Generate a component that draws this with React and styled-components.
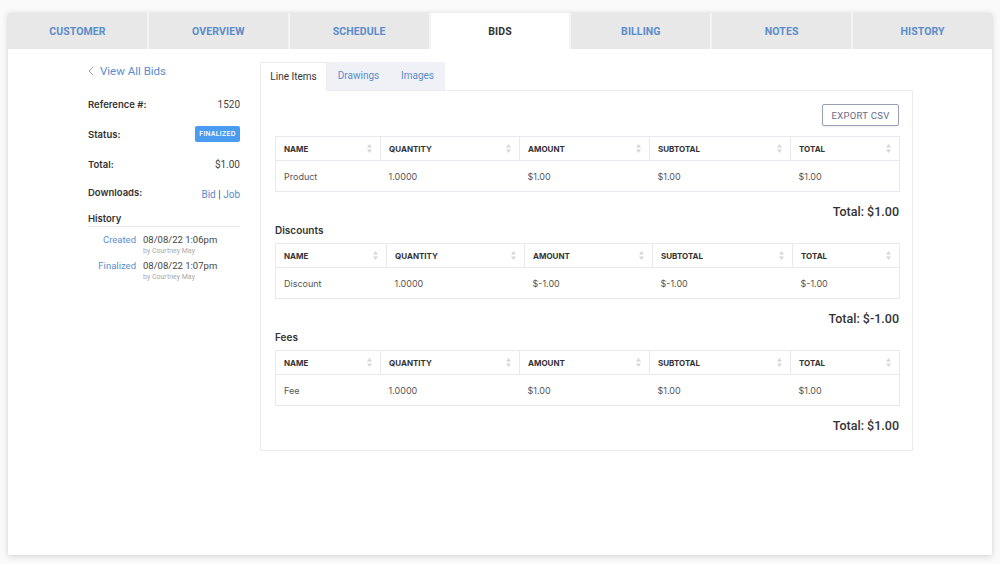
import React, {useState} from 'react';
import styled, {createGlobalStyle} from 'styled-components';

const GlobalStyle = createGlobalStyle`
  html, body {
    margin: 0;
    padding: 0;
    background: #fafafa;
    font-family: Roboto, "Liberation Sans", sans-serif;
  }
`;

const Page = styled.div`
  padding: 13px 8px 9px 8px;
`;

const Card = styled.div`
  height: 542px;
  background: #fff;
  box-shadow: 0 1px 6px rgba(0, 0, 0, 0.18);
  display: flex;
  flex-direction: column;
`;

const TabBar = styled.div`
  display: grid;
  grid-template-columns: repeat(7, 1fr);
  column-gap: 2px;
  background: #f4f4f4;
`;

const Tab = styled.div`
  height: 36px;
  display: flex;
  align-items: center;
  justify-content: center;
  font-size: 10.5px;
  font-weight: 700;
  letter-spacing: 0.1px;
  background: ${(p) => (p.active ? '#fff' : '#e8e8e8')};
  color: ${(p) => (p.active ? '#333' : '#5b8ccb')};
`;

const Body = styled.div`
  display: flex;
  padding-left: 80px;
  gap: 20px;
`;

const Side = styled.div`
  width: 152px;
  padding-top: 14px;
  font-family: Inter, Roboto, sans-serif;
`;

const BackLink = styled.div`
  display: flex;
  align-items: center;
  gap: 6px;
  height: 16px;
  font-size: 11.5px;
  color: #5b8ccb;
  font-family: Roboto, sans-serif;
  margin-bottom: 10px;
`;

const InfoRow = styled.div`
  display: flex;
  align-items: center;
  justify-content: space-between;
  height: ${(p) => p.h || 30}px;
`;

const Label = styled.span`
  font-size: 9.5px;
  font-weight: 600;
  color: #333;
`;

const Value = styled.span`
  font-size: 10px;
  color: #444;
  font-family: Roboto, sans-serif;
`;

const LinkText = styled.span`
  font-size: 10px;
  color: #5b8ccb;
  font-family: Roboto, sans-serif;
`;

const Badge = styled.span`
  background: #4a9cf0;
  color: #fff;
  font-size: 6.5px;
  font-weight: 600;
  letter-spacing: 0.3px;
  padding: 0 6px;
  height: 16px;
  width: 45px;
  box-sizing: border-box;
  display: flex;
  align-items: center;
  justify-content: center;
  border-radius: 2px;
`;

const HistoryHead = styled.div`
  margin-top: 7px;
  line-height: 14px;
  font-size: 9.5px;
  font-weight: 600;
  color: #333;
  border-bottom: 1px solid #e6e6e6;
  margin-bottom: 7px;
`;

const Entry = styled.div`
  display: flex;
  gap: 7px;
  margin-bottom: 4px;
  font-family: Roboto, sans-serif;
`;

const EntryLabel = styled.div`
  width: 48px;
  text-align: right;
  font-size: 9.5px;
  line-height: 12px;
  color: #5b8ccb;
`;

const EntryDate = styled.div`
  font-size: 9.5px;
  line-height: 12px;
  color: #444;
`;

const EntryBy = styled.div`
  font-size: 7px;
  line-height: 10px;
  color: #aaa;
`;

const Main = styled.div`
  width: 653px;
  padding-top: 13px;
`;

const SubTabs = styled.div`
  display: flex;
  height: 28px;
`;

const SubTab = styled.div`
  width: ${(p) => p.w}px;
  display: flex;
  align-items: center;
  justify-content: center;
  font-size: 10px;
  box-sizing: border-box;
  padding-bottom: 2px;
  color: ${(p) => (p.active ? '#333' : '#5b8ccb')};
  background: ${(p) => (p.active ? '#fff' : '#f0f1f6')};
  border: 1px solid ${(p) => (p.active ? '#ececec' : '#f0f1f6')};
  border-bottom: none;
  margin-bottom: ${(p) => (p.active ? '-1px' : '0')};
  position: relative;
  z-index: ${(p) => (p.active ? 1 : 0)};
`;

const Panel = styled.div`
  border: 1px solid #ececec;
  padding: 13px 13px 16px 14px;
  display: flex;
  flex-direction: column;
`;

const Toolbar = styled.div`
  display: flex;
  justify-content: flex-end;
  margin-bottom: 10px;
`;

const ExportButton = styled.button`
  width: 77px;
  height: 22px;
  border: 1px solid #9a9db4;
  background: #fff;
  border-radius: 2px;
  color: #686c86;
  font-family: Roboto, sans-serif;
  font-size: 9.5px;
  letter-spacing: 0.3px;
  padding: 0;
  box-shadow: 0 1px 2px rgba(0, 0, 0, 0.08);
`;

const Table = styled.table`
  width: 624px;
  border-collapse: collapse;
  table-layout: fixed;
  font-family: Inter, Roboto, sans-serif;
`;

const Th = styled.th`
  height: 24px;
  padding: 0 8px;
  border: 1px solid #e8e8ee;
  text-align: left;
  font-size: 8px;
  font-weight: 700;
  color: #333;
  box-sizing: border-box;
`;

const ThInner = styled.div`
  display: flex;
  align-items: center;
  justify-content: space-between;
`;

const Td = styled.td`
  height: 31px;
  padding: 0 8px;
  border: 1px solid #e8e8ee;
  border-left: ${(p) => (p.first ? '1px solid #e8e8ee' : 'none')};
  border-right: ${(p) => (p.last ? '1px solid #e8e8ee' : 'none')};
  font-size: 9px;
  color: #555;
  box-sizing: border-box;
`;

const TotalLine = styled.div`
  text-align: right;
  font-size: 12.5px;
  font-weight: 500;
  color: #333;
  line-height: 16px;
  margin-top: 12px;
`;

const SectionTitle = styled.div`
  font-size: 10px;
  font-weight: 600;
  color: #333;
  line-height: 12px;
  margin-top: 4px;
  margin-bottom: 7px;
  font-family: Inter, Roboto, sans-serif;
`;

const SortIcon = () => (
  <svg width="5" height="9" viewBox="0 0 5 9">
    <polygon points="2.5,0 5,3.6 0,3.6" fill="#d6d6d6" />
    <polygon points="0,5.4 5,5.4 2.5,9" fill="#d6d6d6" />
  </svg>
);

const Chevron = () => (
  <svg width="6" height="10" viewBox="0 0 6 10">
    <polyline points="5,1 1,5 5,9" fill="none" stroke="#9aa0aa" strokeWidth="1" />
  </svg>
);

const columns = ['NAME', 'QUANTITY', 'AMOUNT', 'SUBTOTAL', 'TOTAL'];

const DataTable = ({widths, row}) => (
  <Table>
    <colgroup>
      {widths.map((w, i) => (
        <col key={i} style={{width: w}} />
      ))}
    </colgroup>
    <thead>
      <tr>
        {columns.map((c) => (
          <Th key={c}>
            <ThInner>
              {c}
              <SortIcon />
            </ThInner>
          </Th>
        ))}
      </tr>
    </thead>
    <tbody>
      <tr>
        {row.map((v, i) => (
          <Td key={i} first={i === 0} last={i === row.length - 1}>
            {v}
          </Td>
        ))}
      </tr>
    </tbody>
  </Table>
);

const mainTabs = ['CUSTOMER', 'OVERVIEW', 'SCHEDULE', 'BIDS', 'BILLING', 'NOTES', 'HISTORY'];

const App = () => {
  const [tab, setTab] = useState('BIDS');
  const [sub, setSub] = useState('Line Items');
  const wideA = [105, 139, 130, 141, 109];
  const wideB = [111, 138, 128, 140, 107];

  return (
    <Page>
      <GlobalStyle />
      <Card>
        <TabBar>
          {mainTabs.map((t) => (
            <Tab key={t} active={t === tab} onClick={() => setTab(t)}>
              {t}
            </Tab>
          ))}
        </TabBar>
        <Body>
          <Side>
            <BackLink>
              <Chevron />
              View All Bids
            </BackLink>
            <InfoRow>
              <Label>Reference #:</Label>
              <Value>1520</Value>
            </InfoRow>
            <InfoRow>
              <Label>Status:</Label>
              <Badge>FINALIZED</Badge>
            </InfoRow>
            <InfoRow>
              <Label>Total:</Label>
              <Value>$1.00</Value>
            </InfoRow>
            <InfoRow h={26}>
              <Label>Downloads:</Label>
              <span>
                <LinkText>Bid</LinkText>
                <Value> | </Value>
                <LinkText>Job</LinkText>
              </span>
            </InfoRow>
            <HistoryHead>History</HistoryHead>
            <Entry>
              <EntryLabel>Created</EntryLabel>
              <div>
                <EntryDate>08/08/22 1:06pm</EntryDate>
                <EntryBy>by Courtney May</EntryBy>
              </div>
            </Entry>
            <Entry>
              <EntryLabel>Finalized</EntryLabel>
              <div>
                <EntryDate>08/08/22 1:07pm</EntryDate>
                <EntryBy>by Courtney May</EntryBy>
              </div>
            </Entry>
          </Side>
          <Main>
            <SubTabs>
              {[
                ['Line Items', 67],
                ['Drawings', 63],
                ['Images', 55],
              ].map(([s, w]) => (
                <SubTab key={s} w={w} active={s === sub} onClick={() => setSub(s)}>
                  {s}
                </SubTab>
              ))}
            </SubTabs>
            <Panel>
              <Toolbar>
                <ExportButton>EXPORT CSV</ExportButton>
              </Toolbar>
              <DataTable widths={wideA} row={['Product', '1.0000', '$1.00', '$1.00', '$1.00']} />
              <TotalLine>Total: $1.00</TotalLine>
              <SectionTitle>Discounts</SectionTitle>
              <DataTable widths={wideB} row={['Discount', '1.0000', '$-1.00', '$-1.00', '$-1.00']} />
              <TotalLine>Total: $-1.00</TotalLine>
              <SectionTitle>Fees</SectionTitle>
              <DataTable widths={wideA} row={['Fee', '1.0000', '$1.00', '$1.00', '$1.00']} />
              <TotalLine>Total: $1.00</TotalLine>
            </Panel>
          </Main>
        </Body>
      </Card>
    </Page>
  );
};

export default App;
